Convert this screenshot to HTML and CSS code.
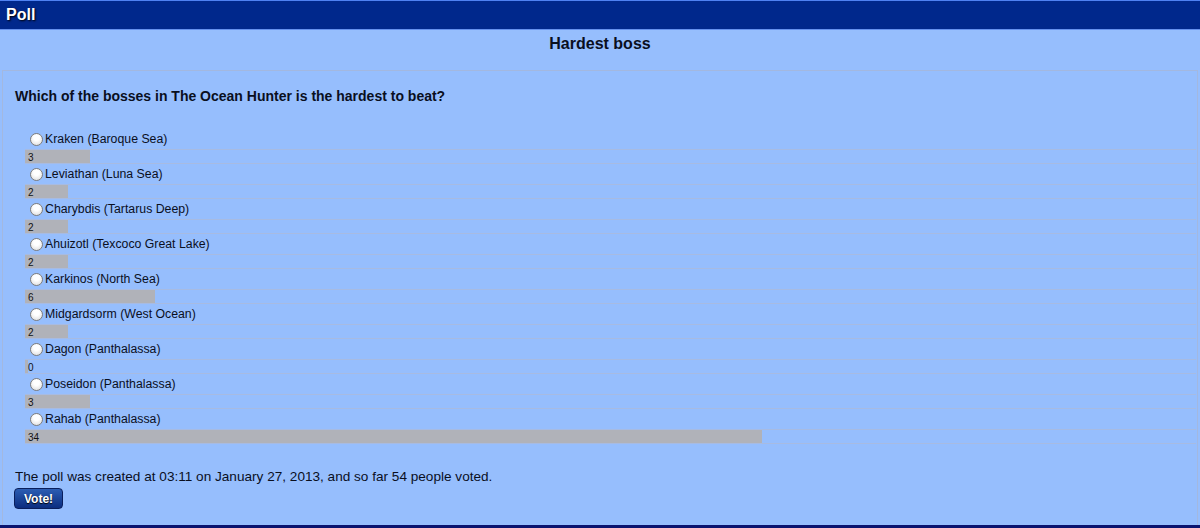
FILE: index.html
```html
<!DOCTYPE html>
<html lang="en">
<head>
    <meta charset="UTF-8">
    <title>Poll</title>
    <link rel="stylesheet" href="styles.css">
</head>
<body>

    <div class="titlebar">Poll</div>

    <h1 class="poll-title">Hardest boss</h1>

    <form class="poll-box">
        <p class="question">Which of the bosses in The Ocean Hunter is the hardest to beat?</p>

        <div class="options">
            <div class="option">
                <label class="option-label"><input type="radio" name="boss">Kraken (Baroque Sea)</label>
                <div class="option-bar"><div class="bar-fill" style="width: 5.56%">3</div></div>
            </div>
            <div class="option">
                <label class="option-label"><input type="radio" name="boss">Leviathan (Luna Sea)</label>
                <div class="option-bar"><div class="bar-fill" style="width: 3.7%">2</div></div>
            </div>
            <div class="option">
                <label class="option-label"><input type="radio" name="boss">Charybdis (Tartarus Deep)</label>
                <div class="option-bar"><div class="bar-fill" style="width: 3.7%">2</div></div>
            </div>
            <div class="option">
                <label class="option-label"><input type="radio" name="boss">Ahuizotl (Texcoco Great Lake)</label>
                <div class="option-bar"><div class="bar-fill" style="width: 3.7%">2</div></div>
            </div>
            <div class="option">
                <label class="option-label"><input type="radio" name="boss">Karkinos (North Sea)</label>
                <div class="option-bar"><div class="bar-fill" style="width: 11.11%">6</div></div>
            </div>
            <div class="option">
                <label class="option-label"><input type="radio" name="boss">Midgardsorm (West Ocean)</label>
                <div class="option-bar"><div class="bar-fill" style="width: 3.7%">2</div></div>
            </div>
            <div class="option">
                <label class="option-label"><input type="radio" name="boss">Dagon (Panthalassa)</label>
                <div class="option-bar"><div class="bar-fill" style="width: 0%">0</div></div>
            </div>
            <div class="option">
                <label class="option-label"><input type="radio" name="boss">Poseidon (Panthalassa)</label>
                <div class="option-bar"><div class="bar-fill" style="width: 5.56%">3</div></div>
            </div>
            <div class="option">
                <label class="option-label"><input type="radio" name="boss">Rahab (Panthalassa)</label>
                <div class="option-bar"><div class="bar-fill" style="width: 62.96%">34</div></div>
            </div>
        </div>

        <p class="summary">The poll was created at 03:11 on January 27, 2013, and so far 54 people voted.</p>
        <button type="button" class="vote-btn">Vote!</button>
    </form>

    <div class="bottom-bar"></div>

</body>
</html>
```

FILE: styles.css
```css
body {
    margin: 0;
    padding: 0;
    background-color: #96befd;
    color: #000;
    font-family: 'Liberation Sans', Arial, Helvetica, sans-serif;
    height: 528px;
    overflow: hidden;
}

.titlebar {
    height: 28px;
    line-height: 27px;
    padding-left: 6px;
    background-color: #00288c;
    border-top: 1px solid #4f82f2;
    border-bottom: 1px solid #6591ee;
    color: white;
    font-size: 16px;
    font-weight: bold;
    text-shadow: 1px 1px 2px #000;
}

.poll-title {
    margin: 0;
    height: 40px;
    padding-top: 4px;
    box-sizing: border-box;
    line-height: 20px;
    text-align: center;
    font-size: 16px;
    font-weight: bold;
    color: #0a0f1e;
}

.poll-box {
    margin: 0 2px;
    padding: 17px 1px 14px 12px;
    height: 455px;
    box-sizing: border-box;
    border: 1px solid #a3b8df;
    border-bottom: none;
}

.question {
    margin: 0;
    line-height: 16px;
    font-size: 14px;
    font-weight: bold;
    color: #0a0f1e;
}

.options {
    margin: 25px 0 0 10px;
}

.option-label {
    display: flex;
    align-items: center;
    height: 20px;
    font-size: 12.3px;
    color: #0a0f1e;
}

.option-label input {
    appearance: none;
    -webkit-appearance: none;
    width: 13px;
    height: 13px;
    margin: 0 2px 0 5px;
    border: 1px solid #7d7d7d;
    border-radius: 50%;
    box-sizing: border-box;
    background: radial-gradient(circle at 50% 35%, #ffffff 30%, #d8d8d8 100%);
}

.option-bar {
    height: 13px;
    border-top: 1px solid #a7bbe2;
    border-bottom: 1px solid #a7bbe2;
}

.bar-fill {
    height: 13px;
    background-color: #b0b2b9;
    font-size: 10px;
    line-height: 15px;
    padding-left: 3px;
    box-sizing: border-box;
    white-space: nowrap;
    overflow: visible;
    color: #111;
}

.summary {
    margin: 25px 0 0 0;
    line-height: 16px;
    font-size: 13.6px;
    color: #0a0f1e;
}

.vote-btn {
    display: block;
    margin-top: 3px;
    margin-left: -1px;
    width: 49px;
    height: 21px;
    padding: 0;
    background: linear-gradient(#2c5db3, #0b2d7f);
    border: 1px solid #0a1f5c;
    border-radius: 4px;
    color: white;
    font-family: 'Liberation Sans', Arial, sans-serif;
    font-size: 12px;
    font-weight: bold;
    text-shadow: 0 1px 1px #000;
    cursor: pointer;
}

.bottom-bar {
    height: 3px;
    background-color: #0a1470;
}
```
